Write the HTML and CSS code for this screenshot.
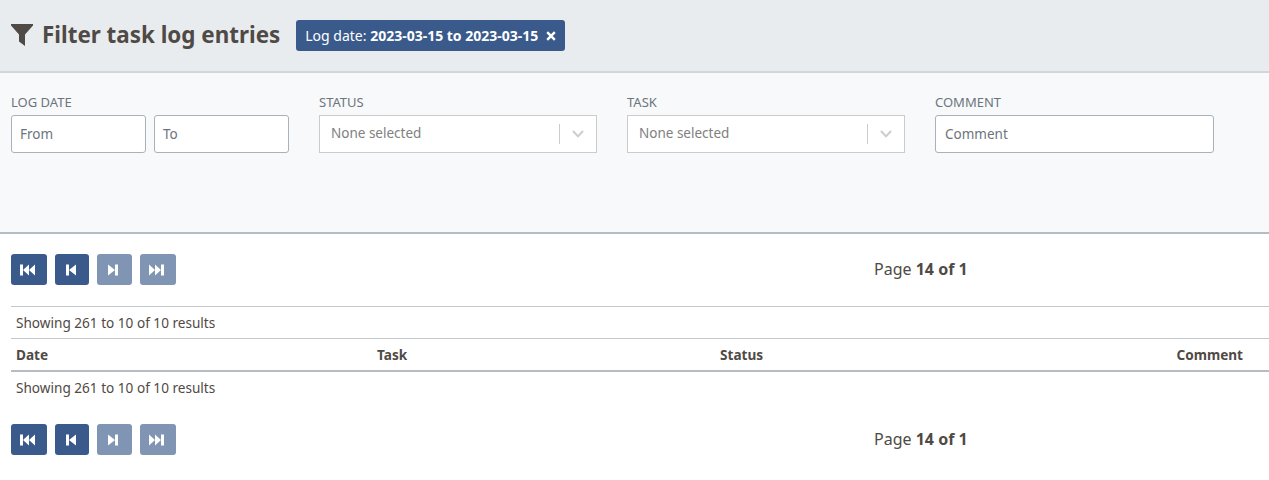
FILE: index.html
```html
<!DOCTYPE html>
<html lang="en">
<head>
<meta charset="utf-8">
<title>Task log</title>
<link rel="stylesheet" href="styles.css">
</head>
<body>
<header class="head">
  <svg class="funnel" viewBox="0 0 24 24" width="24" height="24"><path d="M0 1h22v1.500L14 11.500V23L8 18.500V11.500L0 2.500z"/></svg>
  <h1>Filter task log entries</h1>
  <span class="chip">Log date: <b>2023-03-15 to 2023-03-15</b><svg class="x" viewBox="0 0 10 10" width="10" height="10"><path d="M1.200 1.200l7.600 7.600M8.800 1.200L1.200 8.800"/></svg></span>
</header>
<section class="filters">
  <div class="field">
    <label>LOG DATE</label>
    <div class="dates"><div class="input">From</div><div class="input">To</div></div>
  </div>
  <div class="field">
    <label>STATUS</label>
    <div class="select"><span class="ph">None selected</span><span class="sep"></span><svg class="chev" viewBox="0 0 12 8" width="12" height="8"><path d="M1 1l5 5.400L11 1"/></svg></div>
  </div>
  <div class="field">
    <label>TASK</label>
    <div class="select"><span class="ph">None selected</span><span class="sep"></span><svg class="chev" viewBox="0 0 12 8" width="12" height="8"><path d="M1 1l5 5.400L11 1"/></svg></div>
  </div>
  <div class="field">
    <label>COMMENT</label>
    <div class="input comment">Comment</div>
  </div>
</section>
<main class="content">
  <div class="pager">
    <div class="btns">
      <span class="btn first"><svg viewBox="0 0 15 12" width="15" height="12"><path d="M0 .5h3v11H0zM3 6L9 .5v11zM9 6l6-5.500v11z"/></svg></span>
      <span class="btn"><svg viewBox="0 0 10 12" width="10" height="12"><path d="M0 .5h3v11H0zM3 6l7-5.500v11z"/></svg></span>
      <span class="btn off"><svg viewBox="0 0 10 12" width="10" height="12"><path d="M0 .5L7 6l-7 5.500zM7 .5h3v11H7z"/></svg></span>
      <span class="btn last off"><svg viewBox="0 0 15 12" width="15" height="12"><path d="M0 .5L6 6l-6 5.500zM6 .5L12 6l-6 5.500zM12 .5h3v11h-3z"/></svg></span>
    </div>
    <div class="page">Page <b>14 of 1</b></div>
  </div>
  <div class="showing top">Showing 261 to 10 of 10 results</div>
  <div class="thead"><span>Date</span><span>Task</span><span>Status</span><span>Comment</span></div>
  <div class="showing">Showing 261 to 10 of 10 results</div>
  <div class="pager">
    <div class="btns">
      <span class="btn first"><svg viewBox="0 0 15 12" width="15" height="12"><path d="M0 .5h3v11H0zM3 6L9 .5v11zM9 6l6-5.500v11z"/></svg></span>
      <span class="btn"><svg viewBox="0 0 10 12" width="10" height="12"><path d="M0 .5h3v11H0zM3 6l7-5.500v11z"/></svg></span>
      <span class="btn off"><svg viewBox="0 0 10 12" width="10" height="12"><path d="M0 .5L7 6l-7 5.500zM7 .5h3v11H7z"/></svg></span>
      <span class="btn last off"><svg viewBox="0 0 15 12" width="15" height="12"><path d="M0 .5L6 6l-6 5.500zM6 .5L12 6l-6 5.500zM12 .5h3v11h-3z"/></svg></span>
    </div>
    <div class="page">Page <b>14 of 1</b></div>
  </div>
</main>
</body>
</html>
```
FILE: styles.css
```css
* { box-sizing: border-box; }
html, body { margin: 0; padding: 0; }
body {
  font-family: "Noto Sans", sans-serif;
  font-size: 14px;
  color: #4f4a45;
  background: #fff;
  height: 480px;
  overflow: hidden;
}
.head {
  height: 73px;
  background: #e9ecef;
  border-bottom: 2px solid #d2d6dc;
  display: flex;
  align-items: center;
  padding: 0 0 3px 11px;
}
.funnel { fill: #4f4a45; margin: 2px 7px 0 0; flex: none; }
h1 {
  margin: 2px 16px 0 0;
  font-size: 22.4px;
  font-weight: 700;
  line-height: 30px;
  color: #4f4a45;
}
.chip {
  height: 31px;
  background: #3a5a8c;
  border-radius: 3px;
  color: #fff;
  font-size: 14px;
  display: flex;
  align-items: center;
  padding: 0 9px 0 9px;
  white-space: pre;
  margin-top: 3px;
}
.chip b { font-weight: 700; }
.x { margin-left: 8px; fill: none; stroke: #fff; stroke-width: 2.4; }
.filters {
  height: 161px;
  background: #f8f9fa;
  border-bottom: 2px solid #b4bcc5;
  display: grid;
  grid-template-columns: 278px 278px 278px 279px;
  column-gap: 30px;
  padding: 20px 0 0 11px;
  align-content: start;
}
label {
  display: block;
  font-size: 13px;
  line-height: 19px;
  height: 22px;
  color: #6c757d;
}
.dates { display: flex; gap: 8px; }
.dates .input { flex: 1; }
.input {
  height: 38px;
  background: #fff;
  border: 1px solid #a9b2ba;
  border-radius: 3px;
  padding: 0 8px;
  line-height: 36px;
  font-size: 13.5px;
  color: #6c757d;
}
.input.comment { padding-left: 9px; }
.select {
  height: 38px;
  background: #fff;
  border: 1px solid #ccc;
  display: flex;
  align-items: center;
  padding-left: 11px;
  font-size: 13.5px;
  color: #808080;
}
.ph { flex: 1; padding-bottom: 3px; }
.sep { width: 1px; height: 20px; background: #ccc; }
.chev { margin: 0 12px 0 12px; fill: none; stroke: #ccc; stroke-width: 2; }
.content { padding-left: 11px; }
.pager { display: flex; align-items: center; height: 31px; margin: 20px 0 21px; }
.btns { display: flex; gap: 8px; }
.btn {
  width: 34px;
  height: 31px;
  background: #3a5a8c;
  border-radius: 3px;
  display: flex;
  align-items: center;
  justify-content: center;
  padding-right: 3px;
}
.btn.first, .btn.last { width: 36px; }
.btn.off { width: 35px; background: #8094b3; }
.btn.last { width: 36px; }
.btn svg { fill: #fff; }
.page { margin-left: 698px; padding-bottom: 2px; font-size: 16px; line-height: 22px; }
.page b { font-weight: 700; }
.showing { height: 32px; padding-left: 5px; line-height: 32px; font-size: 13.6px; }
.showing.top { border-top: 1px solid #c3c8cd; }
.thead {
  display: grid;
  grid-template-columns: 361px 343px 1fr auto;
  height: 34px;
  border-top: 1px solid #c3c8cd;
  border-bottom: 2px solid #b4bcc5;
  padding: 0 26px 0 5px;
  line-height: 31px;
  font-weight: 700;
  font-size: 13.6px;
}
```
